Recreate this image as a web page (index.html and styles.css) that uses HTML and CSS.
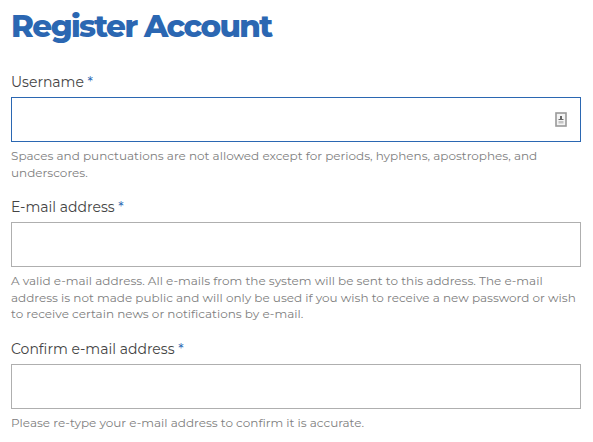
FILE: index.html
```html
<!DOCTYPE html>
<html lang="en">
<head>
    <meta charset="UTF-8">
    <title>Register Account</title>
    <link rel="stylesheet" href="styles.css">
</head>
<body>
    <div class="container">
        <h1>Register Account</h1>

        <div class="input-group">
            <label for="username">Username <span class="required">*</span></label>
            <div class="input-wrap">
                <input type="text" id="username" class="focused">
                <svg class="field-icon" width="12" height="15" viewBox="0 0 12 15">
                    <rect x="1" y="1" width="10" height="13" fill="#f4f4f4" stroke="#999" stroke-width="1.6"/>
                    <path d="M5 4h2v3h1.5v1h-5v-1H5z" fill="#666"/>
                    <path d="M3.5 9h5v2.5h-5z" fill="#c4c4c4"/>
                </svg>
            </div>
            <p class="hint">Spaces and punctuations are not allowed except for periods, hyphens, apostrophes, and underscores.</p>
        </div>

        <div class="input-group">
            <label for="mail">E-mail address <span class="required">*</span></label>
            <input type="text" id="mail">
            <p class="hint">A valid e-mail address. All e-mails from the system will be sent to this address. The e-mail address is not made public and will only be used if you wish to receive a new password or wish to receive certain news or notifications by e-mail.</p>
        </div>

        <div class="input-group">
            <label for="mail2">Confirm e-mail address <span class="required">*</span></label>
            <input type="text" id="mail2">
            <p class="hint">Please re-type your e-mail address to confirm it is accurate.</p>
        </div>
    </div>
</body>
</html>
```

FILE: styles.css
```css
html, body {
    height: 100%;
    overflow: hidden;
}
body {
    font-family: 'Montserrat', 'Inter', 'Open Sans', sans-serif;
    background-color: #fff;
    margin: 0;
    color: #444;
}
.container {
    padding: 0 12px 0 11px;
}
h1 {
    color: #2b67b2;
    font-size: 31px;
    line-height: 38px;
    font-weight: 800;
    letter-spacing: -1.6px;
    margin: 7px 0 28px;
}
.input-group {
    margin-bottom: 17px;
}
label {
    display: block;
    font-size: 14px;
    line-height: 18px;
    margin-bottom: 6px;
}
.required {
    color: #2b67b2;
}
.input-wrap {
    position: relative;
}
input[type="text"] {
    display: block;
    box-sizing: border-box;
    width: 100%;
    height: 45px;
    padding: 0 12px;
    border: 1px solid #afafaf;
    background: #fff;
    outline: none;
}
input.focused {
    border-color: #2b67b2;
}
.field-icon {
    position: absolute;
    top: 15px;
    right: 14px;
}
.hint {
    margin: 6px 0 0;
    font-size: 12px;
    line-height: 16.5px;
    color: #808080;
}
```
